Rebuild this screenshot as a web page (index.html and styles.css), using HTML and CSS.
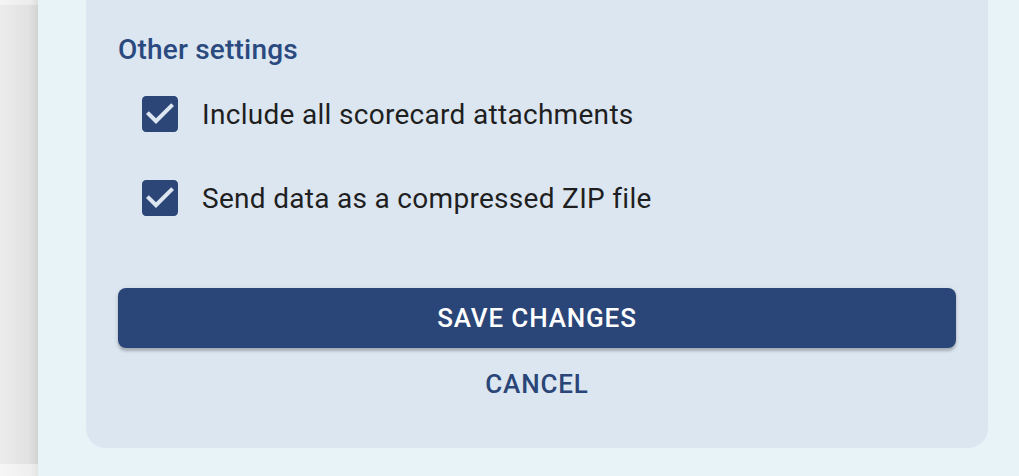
FILE: index.html
```html
<!DOCTYPE html>
<html lang="en">
<head>
<meta charset="utf-8">
<title>Other settings</title>
<link rel="stylesheet" href="styles.css">
</head>
<body>
<div class="page">
  <aside class="sidebar">
    <div class="sidebar-top"></div>
    <div class="sidebar-mid"></div>
    <div class="sidebar-bottom"></div>
  </aside>
  <main class="main">
    <section class="panel">
      <h2 class="heading">Other settings</h2>
      <ul class="options">
        <li class="option">
          <svg class="checkbox" viewBox="3 3 18 18" width="36" height="36"><path d="M19 3H5c-1.11 0-2 .9-2 2v14c0 1.1.89 2 2 2h14c1.11 0 2-.9 2-2V5c0-1.1-.89-2-2-2zm-9 14l-5-5 1.41-1.41L10 14.17l7.59-7.59L19 8l-9 9z"/></svg>
          <span class="label">Include all scorecard attachments</span>
        </li>
        <li class="option">
          <svg class="checkbox" viewBox="3 3 18 18" width="36" height="36"><path d="M19 3H5c-1.11 0-2 .9-2 2v14c0 1.1.89 2 2 2h14c1.11 0 2-.9 2-2V5c0-1.1-.89-2-2-2zm-9 14l-5-5 1.41-1.41L10 14.17l7.59-7.59L19 8l-9 9z"/></svg>
          <span class="label">Send data as a compressed ZIP file</span>
        </li>
      </ul>
      <button class="btn-primary">SAVE CHANGES</button>
      <button class="btn-text">CANCEL</button>
    </section>
  </main>
</div>
</body>
</html>
```

FILE: styles.css
```css
html, body {
  margin: 0;
  padding: 0;
}
body {
  font-family: Roboto, "Noto Sans", sans-serif;
  background: #e8f3f8;
  width: 1019px;
  height: 476px;
  overflow: hidden;
}
.page {
  display: flex;
  height: 476px;
}
.sidebar {
  width: 38px;
  flex: none;
  display: flex;
  flex-direction: column;
}
.sidebar-top {
  height: 5px;
  background: linear-gradient(to right, #f4f4f4, #ececec 80%, #dedede);
}
.sidebar-mid {
  flex: 1;
  background: linear-gradient(to right, #ececec, #e2e2e2 75%, #d2d2d2);
}
.sidebar-bottom {
  height: 12px;
  background: linear-gradient(to right, #f6f6f6, #efefef 80%, #e4e4e4);
}
.main {
  flex: 1;
  padding: 0 31px 28px 48px;
  display: flex;
  flex-direction: column;
}
.panel {
  flex: 1;
  background: #dce6f1;
  border-radius: 0 0 20px 20px;
  padding: 34px 32px 40px;
  display: flex;
  flex-direction: column;
}
.heading {
  margin: 0;
  font-size: 28px;
  line-height: 32px;
  font-weight: 500;
  letter-spacing: 0.2px;
  color: #2a4a7f;
}
.options {
  list-style: none;
  margin: 6px 0 0;
  padding: 0 0 0 24px;
}
.option {
  height: 84px;
  display: flex;
  align-items: center;
  gap: 24px;
}
.checkbox {
  width: 36px;
  height: 36px;
  flex: none;
  fill: #2b4677;
}
.label {
  font-size: 28px;
  color: #1f1f1f;
  letter-spacing: 0.3px;
}
.btn-primary {
  margin-top: 48px;
  height: 60px;
  border: none;
  border-radius: 8px;
  background: #2a4577;
  color: #fff;
  font-family: Roboto, sans-serif;
  font-size: 26px;
  font-weight: 500;
  letter-spacing: 0.85px;
  box-shadow: 0 3px 3px rgba(0,0,0,0.22), 0 1px 6px rgba(0,0,0,0.08);
}
.btn-text {
  margin-top: 12px;
  height: 48px;
  border: none;
  background: transparent;
  color: #2a4577;
  font-family: Roboto, sans-serif;
  font-size: 26px;
  font-weight: 500;
  letter-spacing: 0.85px;
}
```
